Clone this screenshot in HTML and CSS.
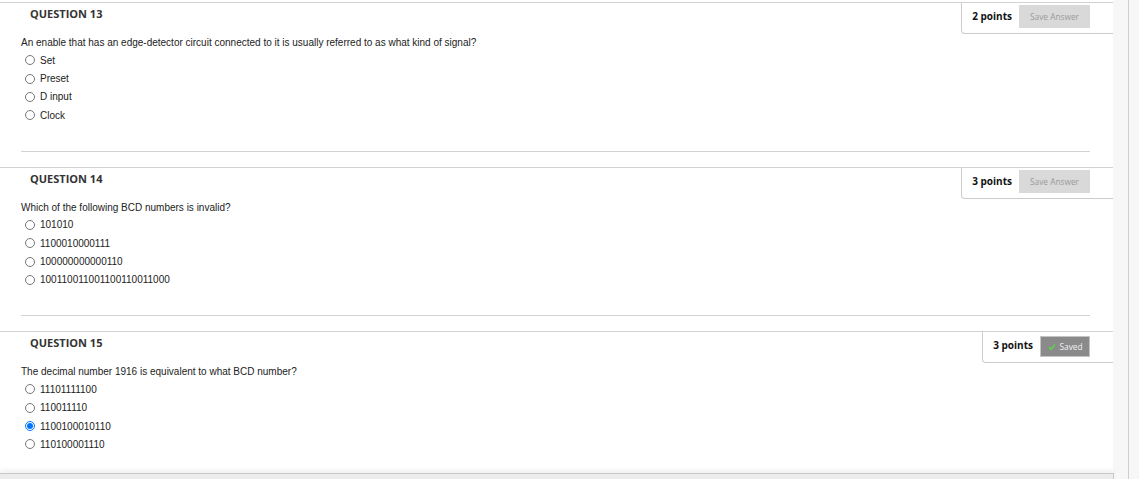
FILE: index.html
```html
<!DOCTYPE html>
<html>
<head>
<meta charset="utf-8">
<link rel="stylesheet" href="styles.css">
</head>
<body>
<div class="page">
  <main class="content">
    <section class="question">
      <div class="qhead">
        <h3 class="qtitle">QUESTION 13</h3>
        <div class="points">
          <span class="pts">2 points</span>
          <button class="save">Save Answer</button>
        </div>
      </div>
      <p class="qtext">An enable that has an edge-detector circuit connected to it is usually referred to as what kind of signal?</p>
      <ul class="options">
        <li><input type="radio" name="q13"><label>Set</label></li>
        <li><input type="radio" name="q13"><label>Preset</label></li>
        <li><input type="radio" name="q13"><label>D input</label></li>
        <li><input type="radio" name="q13"><label>Clock</label></li>
      </ul>
      <hr class="sep">
    </section>
    <section class="question">
      <div class="qhead">
        <h3 class="qtitle">QUESTION 14</h3>
        <div class="points">
          <span class="pts">3 points</span>
          <button class="save">Save Answer</button>
        </div>
      </div>
      <p class="qtext">Which of the following BCD numbers is invalid?</p>
      <ul class="options">
        <li><input type="radio" name="q14"><label>101010</label></li>
        <li><input type="radio" name="q14"><label>1100010000111</label></li>
        <li><input type="radio" name="q14"><label>100000000000110</label></li>
        <li><input type="radio" name="q14"><label>100110011001100110011000</label></li>
      </ul>
      <hr class="sep">
    </section>
    <section class="question">
      <div class="qhead">
        <h3 class="qtitle">QUESTION 15</h3>
        <div class="points">
          <span class="pts">3 points</span>
          <button class="saved"><svg class="check" viewBox="0 0 10 10" width="8" height="8"><path d="M1.2 5.4 L3.8 7.9 L8.8 1.8" fill="none" stroke="#5fd14a" stroke-width="1.8"/></svg>Saved</button>
        </div>
      </div>
      <p class="qtext">The decimal number 1916 is equivalent to what BCD number?</p>
      <ul class="options">
        <li><input type="radio" name="q15"><label>11101111100</label></li>
        <li><input type="radio" name="q15"><label>110011110</label></li>
        <li><input type="radio" name="q15" checked><label>1100100010110</label></li>
        <li><input type="radio" name="q15"><label>110100001110</label></li>
      </ul>
      <hr class="sep">
    </section>
  </main>
  <aside class="side"><div class="side-line"></div></aside>
</div>
<div class="bottombar"></div>
</body>
</html>
```

FILE: styles.css
```css
html, body {
  margin: 0;
  padding: 0;
  background: #ffffff;
}
body {
  font-family: "Liberation Sans", Arial, sans-serif;
  overflow: hidden;
}
.page {
  display: flex;
  min-height: 100vh;
}
.content {
  width: 1113px;
  flex: none;
  background: #ffffff;
  padding-top: 2px;
}
.side {
  flex: 1;
  background: #f7f7f7;
  display: flex;
}
.side-line {
  margin-left: 15px;
  width: 1px;
  background: #cfcfcf;
}
.question {
  border-top: 1px solid #d2d2d2;
}
.qhead {
  display: flex;
  justify-content: space-between;
  align-items: flex-start;
}
.qtitle {
  margin: 0;
  padding: 1px 0 0 30px;
  font-family: "Open Sans", sans-serif;
  font-weight: 700;
  font-size: 11px;
  line-height: 20px;
  color: #333333;
}
.points {
  display: flex;
  align-items: center;
  gap: 7px;
  padding: 2px 23px 5px 10px;
  border-left: 1px solid #cccccc;
  border-bottom: 1px solid #cccccc;
  border-bottom-left-radius: 4px;
}
.pts {
  font-family: "Open Sans", sans-serif;
  font-weight: 700;
  font-size: 10px;
  color: #111111;
  line-height: 23px;
}
.save {
  height: 23px;
  width: 71px;
  padding: 0;
  border: none;
  background: #d9d9d9;
  color: #9a9a9a;
  font-family: "Open Sans", sans-serif;
  font-size: 8.3px;
}
.saved {
  height: 21px;
  width: 50px;
  margin-top: 2px;
  align-self: flex-start;
  padding: 0 0 0 1px;
  border: 1px solid #c4c4c4;
  background: #8a8a8a;
  color: #f2f2f2;
  font-family: "Open Sans", sans-serif;
  font-size: 8.3px;
  display: flex;
  align-items: center;
  justify-content: center;
  gap: 3px;
}
.check {
  display: block;
}
.qtext {
  margin: 2px 0 1px 21px;
  font-size: 10px;
  line-height: 14px;
  color: #222222;
}
.options {
  list-style: none;
  margin: 0;
  padding: 0;
}
.options li {
  height: 18.4px;
  display: flex;
  align-items: center;
  padding-left: 25px;
  font-size: 10px;
  color: #222222;
}
.options input {
  width: 10px;
  height: 10px;
  margin: 0 5px 0 0;
}
.sep {
  margin: 26px 23px 15px 21px;
  border: none;
  border-top: 1px solid #d2d2d2;
  height: 0;
}
.bottombar {
  position: fixed;
  left: 0;
  bottom: 0;
  width: 1113px;
  height: 5px;
  background: #ececec;
  border-top: 1px solid #c8c8c8;
  border-right: 1px solid #c8c8c8;
  box-shadow: 0 -3px 4px rgba(0, 0, 0, 0.06);
}
```
